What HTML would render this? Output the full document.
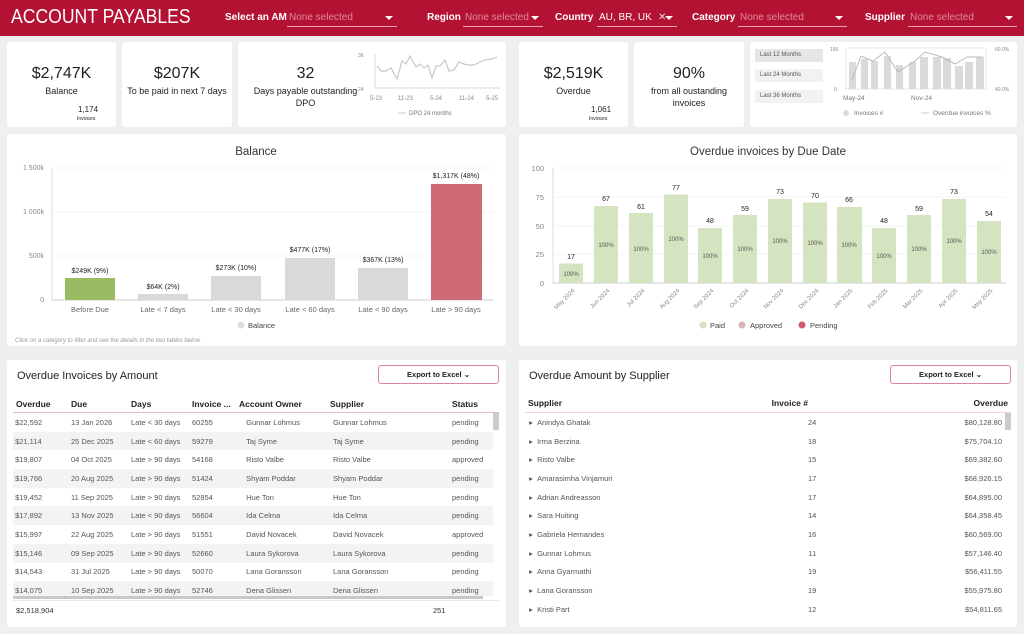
<!DOCTYPE html>
<html><head><meta charset="utf-8"><style>
*{margin:0;padding:0;box-sizing:border-box}
body{width:1024px;height:634px;background:#efefef;font-family:"Liberation Sans",sans-serif;position:relative;overflow:hidden;color:#222}
.hdr{position:absolute;left:0;top:0;width:1024px;height:36px;background:#b41232}
.t{position:absolute;white-space:nowrap}
.card{position:absolute;background:#fff;border-radius:3px}
.lbl{color:#fff;font-weight:bold;font-size:10px;top:12px}
.dd{position:absolute;top:10px;height:17px;border-bottom:1px solid #e9a6b2;color:#e08a9b;font-size:10px;padding-left:2px;line-height:16px}
.dd:after{content:"";position:absolute;right:4px;top:6px;border:4px solid transparent;border-top:4px solid #fff}
.big{font-size:16px;width:100%;text-align:center;position:absolute}
.sub{font-size:9px;width:100%;text-align:center;position:absolute;line-height:12px}
table{border-collapse:collapse;font-size:7.5px;color:#555}
.tbl td{height:18.7px;padding:0}
.btn{position:absolute;width:121px;height:19px;border:1px solid #d9899a;border-radius:3px;font-size:7.5px;font-weight:bold;text-align:center;line-height:17px;color:#222}
</style></head><body>
<div class="hdr"></div>
<div class="t" style="left:11px;top:6px;font-size:20px;color:#fff;transform:scaleX(0.88);transform-origin:0 0">ACCOUNT PAYABLES</div>
<div class="t lbl" style="left:225px">Select an AM</div>
<div class="dd" style="left:287px;width:110px">None selected</div>
<div class="t lbl" style="left:427px">Region</div>
<div class="dd" style="left:463px;width:80px">None selected</div>
<div class="t lbl" style="left:555px">Country</div>
<div class="dd" style="left:597px;width:80px;color:#fff">AU, BR, UK<span style="position:absolute;left:61px;color:#ddd">✕</span></div>
<div class="t lbl" style="left:692px">Category</div>
<div class="dd" style="left:738px;width:109px">None selected</div>
<div class="t lbl" style="left:865px">Supplier</div>
<div class="dd" style="left:908px;width:109px">None selected</div>

<div class="card" style="left:7px;top:42px;width:109px;height:85px"><div class="big" style="top:23px">$2,747K</div><div class="sub" style="top:43px">Balance</div><div class="t" style="left:71px;top:63px;font-size:8px">1,174</div><div class="t" style="left:70px;top:74px;font-size:5px">Invoices</div></div>
<div class="card" style="left:122px;top:42px;width:110px;height:85px"><div class="big" style="top:23px">$207K</div><div class="sub" style="top:43px">To be paid in next 7 days</div></div>
<div class="card" style="left:238px;top:42px;width:268px;height:85px"><div class="t" style="left:0;width:135px;text-align:center;top:23px;font-size:16px">32</div><div class="t" style="left:0;width:135px;text-align:center;top:43px;font-size:9px;line-height:12px">Days payable outstanding<br>DPO</div></div>
<div class="card" style="left:519px;top:42px;width:109px;height:85px"><div class="big" style="top:23px">$2,519K</div><div class="sub" style="top:43px">Overdue</div><div class="t" style="left:72px;top:63px;font-size:8px">1,061</div><div class="t" style="left:70px;top:74px;font-size:5px">Invoices</div></div>
<div class="card" style="left:634px;top:42px;width:110px;height:85px"><div class="big" style="top:23px">90%</div><div class="sub" style="top:43px">from all oustanding<br>invoices</div></div>
<div class="card" style="left:750px;top:42px;width:267px;height:85px">
<div class="t" style="left:5px;top:7px;width:68px;height:13px;background:#e6e6e6;font-size:6px;line-height:13px;padding-left:5px;color:#555">Last 12 Months</div>
<div class="t" style="left:5px;top:27px;width:68px;height:13px;background:#f2f2f2;font-size:6px;line-height:13px;padding-left:5px;color:#555">Last 24 Months</div>
<div class="t" style="left:5px;top:48px;width:68px;height:13px;background:#f2f2f2;font-size:6px;line-height:13px;padding-left:5px;color:#555">Last 36 Months</div></div>

<div class="card" style="left:7px;top:134px;width:499px;height:212px"></div>
<div class="card" style="left:519px;top:134px;width:498px;height:212px"></div>
<div class="card" style="left:7px;top:360px;width:499px;height:267px"></div>
<div class="card" style="left:519px;top:360px;width:498px;height:267px"></div>

<svg style="position:absolute;left:0;top:0" width="1024" height="634" font-family="Liberation Sans, sans-serif">
<text x="358" y="57" font-size="5" fill="#888">36</text><text x="358" y="91" font-size="5" fill="#888">24</text>
<line x1="375" y1="54" x2="375" y2="88" stroke="#ccc" stroke-width="0.7"/><line x1="375" y1="88" x2="500" y2="88" stroke="#ccc" stroke-width="0.7"/>
<polyline fill="none" stroke="#c8c8c8" stroke-width="1.2" points="377,66 381,71 386,71 391,68 397,79 402,61 406,64 410,56 416,67 420,64 424,68 428,65 432,78 436,66 440,66 445,60 449,71 454,70 459,62 464,64 468,65 474,65 480,62 485,60 492,59 497,57"/>
<g font-size="6" fill="#888"><text x="370" y="100">5-23</text><text x="398" y="100">11-23</text><text x="430" y="100">5-24</text><text x="459" y="100">11-24</text><text x="486" y="100">5-25</text></g>
<line x1="398" y1="113" x2="406" y2="113" stroke="#ccc"/><text x="409" y="115" font-size="6" fill="#777">DPO 24 months</text>
<rect x="846" y="48" width="140" height="41" fill="none" stroke="#ddd" stroke-width="0.7"/>
<g fill="#dadada"><rect x="849" y="62" width="7" height="27"/><rect x="861" y="59" width="7" height="30"/><rect x="871" y="61" width="7" height="28"/><rect x="884" y="56" width="7" height="33"/><rect x="896" y="65" width="7" height="24"/><rect x="909" y="62" width="7" height="27"/><rect x="920" y="57" width="8" height="32"/><rect x="933" y="57" width="8" height="32"/><rect x="943" y="58" width="8" height="31"/><rect x="955" y="66" width="8" height="23"/><rect x="965" y="62" width="8" height="27"/><rect x="976" y="57" width="8" height="32"/></g>
<polyline fill="none" stroke="#bbb" stroke-width="1" points="852,80 861,56 873,61 885,52 898,72 915,61 925,52 942,57 955,64 967,57 983,57"/>
<g font-size="5" fill="#888"><text x="830" y="51">160</text><text x="834" y="91">0</text><text x="995" y="51">60.0%</text><text x="995" y="91">40.0%</text></g>
<g font-size="6.5" fill="#777"><text x="843" y="100">May-24</text><text x="911" y="100">Nov-24</text>
<circle cx="846" cy="113" r="3" fill="#ddd"/><text x="854" y="115">Invoices #</text><line x1="921" y1="113" x2="929" y2="113" stroke="#ccc"/><text x="933" y="115">Overdue invoices %</text></g>

<text x="256" y="155" font-size="11.5" fill="#333" text-anchor="middle">Balance</text>
<g stroke="#f0f0f0" stroke-width="0.7"><line x1="52" y1="168" x2="493" y2="168"/><line x1="52" y1="212" x2="493" y2="212"/><line x1="52" y1="256" x2="493" y2="256"/></g>
<line x1="52" y1="168" x2="52" y2="300" stroke="#ddd"/><line x1="52" y1="300" x2="493" y2="300" stroke="#ccc"/>
<g font-size="7" fill="#888" text-anchor="end"><text x="44" y="170">1 500k</text><text x="44" y="214">1 000k</text><text x="44" y="258">500k</text><text x="44" y="302">0</text></g>
<rect x="65" y="278" width="50" height="22" fill="#9bbb62"/><rect x="138" y="294" width="50" height="6" fill="#d9d9d9"/><rect x="211" y="276" width="50" height="24" fill="#d9d9d9"/><rect x="285" y="258" width="50" height="42" fill="#d9d9d9"/><rect x="358" y="268" width="50" height="32" fill="#d9d9d9"/><rect x="431" y="184" width="51" height="116" fill="#cf6b76"/>
<g font-size="7" fill="#222" text-anchor="middle"><text x="90" y="273">$249K (9%)</text><text x="163" y="289">$64K (2%)</text><text x="236" y="270">$273K (10%)</text><text x="310" y="252">$477K (17%)</text><text x="383" y="262">$367K (13%)</text><text x="456" y="178">$1,317K (48%)</text></g>
<g font-size="7.5" fill="#666" text-anchor="middle"><text x="90" y="312">Before Due</text><text x="163" y="312">Late &lt; 7 days</text><text x="236" y="312">Late &lt; 30 days</text><text x="310" y="312">Late &lt; 60 days</text><text x="383" y="312">Late &lt; 90 days</text><text x="456" y="312">Late &gt; 90 days</text></g>
<circle cx="241" cy="325" r="3.5" fill="#ddd"/><text x="248" y="328" font-size="7.5" fill="#444">Balance</text>
<text x="15" y="342" font-size="6" fill="#999" font-style="italic">Click on a category to filter and see the details in the two tables below</text>

<text x="768" y="155" font-size="11.5" fill="#333" text-anchor="middle">Overdue invoices by Due Date</text>
<g stroke="#f0f0f0" stroke-width="0.7"><line x1="553" y1="168" x2="1006" y2="168"/><line x1="553" y1="197" x2="1006" y2="197"/><line x1="553" y1="226" x2="1006" y2="226"/><line x1="553" y1="254" x2="1006" y2="254"/></g>
<line x1="553" y1="168" x2="553" y2="283" stroke="#ddd"/><line x1="553" y1="283" x2="1006" y2="283" stroke="#ccc"/>
<g font-size="7.5" fill="#888" text-anchor="end"><text x="544" y="171">100</text><text x="544" y="200">75</text><text x="544" y="229">50</text><text x="544" y="257">25</text><text x="544" y="286">0</text></g>
<g fill="#d5e4c0">
<rect x="559" y="263.5" width="24" height="19.5"/><rect x="594" y="206" width="24" height="77"/><rect x="629" y="213" width="24" height="70"/><rect x="664" y="194.5" width="24" height="88.5"/><rect x="698" y="228" width="24" height="55"/><rect x="733" y="215" width="24" height="68"/><rect x="768" y="199" width="24" height="84"/><rect x="803" y="202.5" width="24" height="80.5"/><rect x="837" y="207" width="25" height="76"/><rect x="872" y="228" width="24" height="55"/><rect x="907" y="215" width="24" height="68"/><rect x="942" y="199" width="24" height="84"/><rect x="977" y="221" width="24" height="62"/></g>
<g font-size="7" fill="#222" text-anchor="middle"><text x="571" y="259">17</text><text x="606" y="201">67</text><text x="641" y="209">61</text><text x="676" y="190">77</text><text x="710" y="223">48</text><text x="745" y="211">59</text><text x="780" y="194">73</text><text x="815" y="198">70</text><text x="849" y="202">66</text><text x="884" y="223">48</text><text x="919" y="211">59</text><text x="954" y="194">73</text><text x="989" y="216">54</text></g>
<g font-size="6" fill="#555" text-anchor="middle"><text x="571" y="276">100%</text><text x="606" y="247">100%</text><text x="641" y="251">100%</text><text x="676" y="241">100%</text><text x="710" y="258">100%</text><text x="745" y="251">100%</text><text x="780" y="243">100%</text><text x="815" y="245">100%</text><text x="849" y="247">100%</text><text x="884" y="258">100%</text><text x="919" y="251">100%</text><text x="954" y="243">100%</text><text x="989" y="254">100%</text></g>
<g font-size="6" fill="#888" text-anchor="end">
<text transform="translate(575,291) rotate(-45)">May 2024</text><text transform="translate(610,291) rotate(-45)">Jun 2024</text><text transform="translate(645,291) rotate(-45)">Jul 2024</text><text transform="translate(680,291) rotate(-45)">Aug 2024</text><text transform="translate(714,291) rotate(-45)">Sep 2024</text><text transform="translate(749,291) rotate(-45)">Oct 2024</text><text transform="translate(784,291) rotate(-45)">Nov 2024</text><text transform="translate(819,291) rotate(-45)">Dec 2024</text><text transform="translate(853,291) rotate(-45)">Jan 2025</text><text transform="translate(888,291) rotate(-45)">Feb 2025</text><text transform="translate(923,291) rotate(-45)">Mar 2025</text><text transform="translate(958,291) rotate(-45)">Apr 2025</text><text transform="translate(993,291) rotate(-45)">May 2025</text></g>
<g font-size="7.5" fill="#444"><circle cx="703" cy="325" r="3.5" fill="#d5e4c0"/><text x="710" y="328">Paid</text><circle cx="742" cy="325" r="3.5" fill="#dcb3b3"/><text x="750" y="328">Approved</text><circle cx="802" cy="325" r="3.5" fill="#d05c6c"/><text x="810" y="328">Pending</text></g>
</svg>

<div class="t" style="left:17px;top:370px;font-size:11px;color:#222">Overdue Invoices by Amount</div>
<div class="btn" style="left:378px;top:365px">Export to Excel ⌄</div>
<div class="t" style="left:13px;top:396px;width:486px;height:17px;border-bottom:1.5px solid #e9b8c1;font-size:8.5px;font-weight:bold;color:#222">
<span class="t" style="left:3px;top:3px">Overdue</span><span class="t" style="left:58px;top:3px">Due</span><span class="t" style="left:118px;top:3px">Days</span><span class="t" style="left:179px;top:3px">Invoice ...</span><span class="t" style="left:226px;top:3px">Account Owner</span><span class="t" style="left:317px;top:3px">Supplier</span><span class="t" style="left:439px;top:3px">Status</span></div>
<div class="t" style="left:13px;top:413px;width:480px;height:183px;overflow:hidden">
<table class="tbl" style="width:480px">
<colgroup><col style="width:58px"><col style="width:60px"><col style="width:61px"><col style="width:50px"><col style="width:91px"><col style="width:119px"><col></colgroup>
<tr><td>&nbsp;$22,592</td><td>13 Jan 2026</td><td>Late &lt; 30 days</td><td>60255</td><td>&nbsp;&nbsp;Gunnar Lohmus</td><td>Gunnar Lohmus</td><td>pending</td></tr>
<tr style="background:#f3f3f3"><td>&nbsp;$21,114</td><td>25 Dec 2025</td><td>Late &lt; 60 days</td><td>59279</td><td>&nbsp;&nbsp;Taj Syme</td><td>Taj Syme</td><td>pending</td></tr>
<tr><td>&nbsp;$19,807</td><td>04 Oct 2025</td><td>Late &gt; 90 days</td><td>54168</td><td>&nbsp;&nbsp;Risto Valbe</td><td>Risto Valbe</td><td>approved</td></tr>
<tr style="background:#f3f3f3"><td>&nbsp;$19,766</td><td>20 Aug 2025</td><td>Late &gt; 90 days</td><td>51424</td><td>&nbsp;&nbsp;Shyam Poddar</td><td>Shyam Poddar</td><td>pending</td></tr>
<tr><td>&nbsp;$19,452</td><td>11 Sep 2025</td><td>Late &gt; 90 days</td><td>52854</td><td>&nbsp;&nbsp;Hue Ton</td><td>Hue Ton</td><td>pending</td></tr>
<tr style="background:#f3f3f3"><td>&nbsp;$17,892</td><td>13 Nov 2025</td><td>Late &lt; 90 days</td><td>56604</td><td>&nbsp;&nbsp;Ida Celma</td><td>Ida Celma</td><td>pending</td></tr>
<tr><td>&nbsp;$15,997</td><td>22 Aug 2025</td><td>Late &gt; 90 days</td><td>51551</td><td>&nbsp;&nbsp;David Novacek</td><td>David Novacek</td><td>approved</td></tr>
<tr style="background:#f3f3f3"><td>&nbsp;$15,146</td><td>09 Sep 2025</td><td>Late &gt; 90 days</td><td>52660</td><td>&nbsp;&nbsp;Laura Sykorova</td><td>Laura Sykorova</td><td>pending</td></tr>
<tr><td>&nbsp;$14,543</td><td>31 Jul 2025</td><td>Late &gt; 90 days</td><td>50070</td><td>&nbsp;&nbsp;Lana Goransson</td><td>Lana Goransson</td><td>pending</td></tr>
<tr style="background:#f3f3f3"><td>&nbsp;$14,075</td><td>10 Sep 2025</td><td>Late &gt; 90 days</td><td>52746</td><td>&nbsp;&nbsp;Dena Glissen</td><td>Dena Glissen</td><td>pending</td></tr>
</table></div>
<div class="t" style="left:493px;top:413px;width:6px;height:17px;background:#ccc"></div>
<div class="t" style="left:13px;top:596px;width:470px;height:3px;background:#c8c8c8"></div>
<div class="t" style="left:13px;top:600px;width:486px;height:1px;background:#e8e8e8"></div>
<div class="t" style="left:16px;top:606px;font-size:7.5px;color:#333">$2,518,904</div>
<div class="t" style="left:433px;top:606px;font-size:7.5px;color:#333">251</div>

<div class="t" style="left:529px;top:370px;font-size:11px;color:#222">Overdue Amount by Supplier</div>
<div class="btn" style="left:890px;top:365px">Export to Excel ⌄</div>
<div class="t" style="left:525px;top:396px;width:486px;height:17px;border-bottom:1.5px solid #f3d3d9;font-size:8.5px;font-weight:bold;color:#222">
<span class="t" style="left:3px;top:2px">Supplier</span><span class="t" style="left:235px;top:2px;width:48px;text-align:right">Invoice #</span><span class="t" style="right:3px;top:2px">Overdue</span></div>
<div class="t" style="left:525px;top:413px;width:480px;height:208px;overflow:hidden">
<table class="tbl" style="width:480px">
<colgroup><col style="width:283px"><col style="width:0"><col></colgroup>
<tr><td>&nbsp;&nbsp;▸&nbsp;&nbsp;Anindya Ghatak</td><td style="text-align:right">24</td><td style="text-align:right;padding-right:3px">$80,128.80</td></tr>
<tr><td>&nbsp;&nbsp;▸&nbsp;&nbsp;Irma Berzina</td><td style="text-align:right">18</td><td style="text-align:right;padding-right:3px">$75,704.10</td></tr>
<tr><td>&nbsp;&nbsp;▸&nbsp;&nbsp;Risto Valbe</td><td style="text-align:right">15</td><td style="text-align:right;padding-right:3px">$69,382.60</td></tr>
<tr><td>&nbsp;&nbsp;▸&nbsp;&nbsp;Amarasimha Vinjamuri</td><td style="text-align:right">17</td><td style="text-align:right;padding-right:3px">$68,926.15</td></tr>
<tr><td>&nbsp;&nbsp;▸&nbsp;&nbsp;Adrian Andreasson</td><td style="text-align:right">17</td><td style="text-align:right;padding-right:3px">$64,895.00</td></tr>
<tr><td>&nbsp;&nbsp;▸&nbsp;&nbsp;Sara Huiting</td><td style="text-align:right">14</td><td style="text-align:right;padding-right:3px">$64,358.45</td></tr>
<tr><td>&nbsp;&nbsp;▸&nbsp;&nbsp;Gabriela Hernandes</td><td style="text-align:right">16</td><td style="text-align:right;padding-right:3px">$60,569.00</td></tr>
<tr><td>&nbsp;&nbsp;▸&nbsp;&nbsp;Gunnar Lohmus</td><td style="text-align:right">11</td><td style="text-align:right;padding-right:3px">$57,146.40</td></tr>
<tr><td>&nbsp;&nbsp;▸&nbsp;&nbsp;Anna Gyarmathi</td><td style="text-align:right">19</td><td style="text-align:right;padding-right:3px">$56,411.55</td></tr>
<tr><td>&nbsp;&nbsp;▸&nbsp;&nbsp;Lana Goransson</td><td style="text-align:right">19</td><td style="text-align:right;padding-right:3px">$55,975.80</td></tr>
<tr><td>&nbsp;&nbsp;▸&nbsp;&nbsp;Kristi Part</td><td style="text-align:right">12</td><td style="text-align:right;padding-right:3px">$54,811.65</td></tr>
</table></div>
<div class="t" style="left:1005px;top:413px;width:6px;height:17px;background:#ccc"></div>
</body></html>
